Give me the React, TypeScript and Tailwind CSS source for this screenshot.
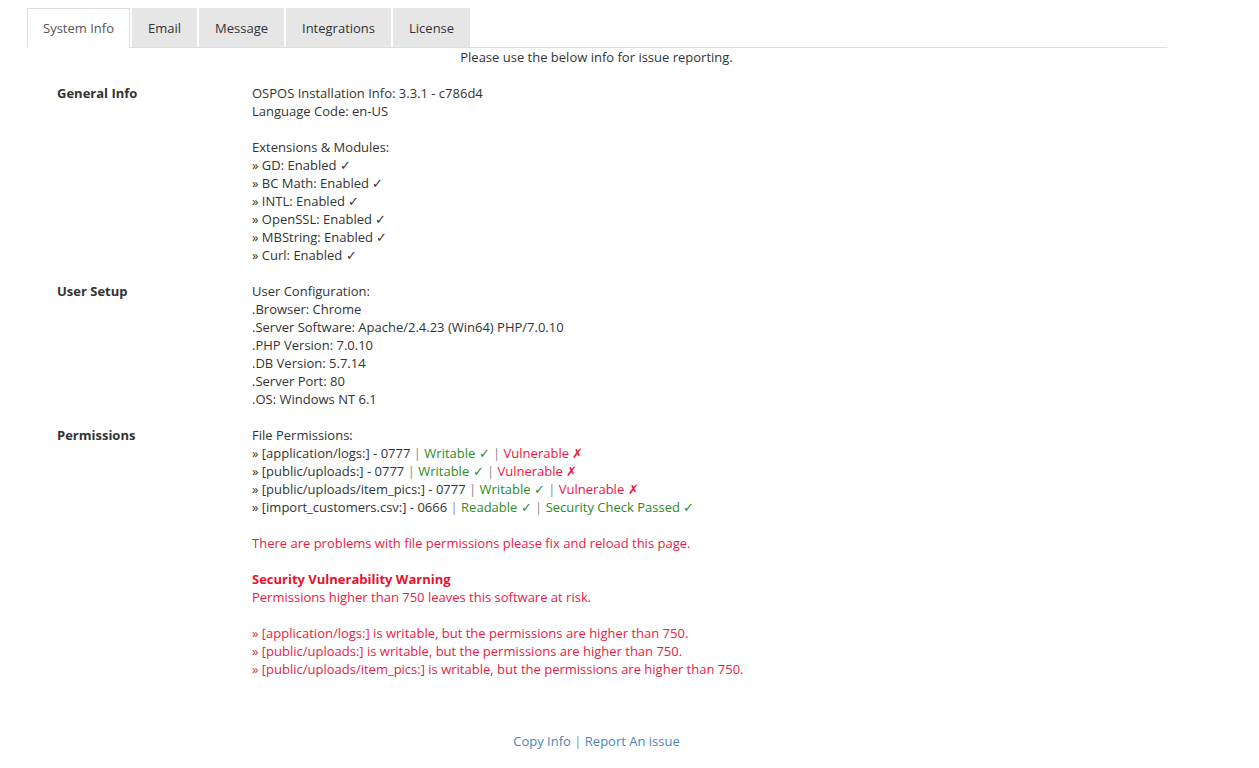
import React from 'react';

const G = ({ children }: { children: React.ReactNode }) => <span className="text-[#2f8a23]">{children}</span>;
const R = ({ children }: { children: React.ReactNode }) => <span className="text-[#ec1744]">{children}</span>;
const Pipe = () => <span className="text-[#8a8a8a]"> | </span>;

const tabs = ['System Info', 'Email', 'Message', 'Integrations', 'License'];

const modules = ['GD', 'BC Math', 'INTL', 'OpenSSL', 'MBString', 'Curl'];

const setup = [
  '.Browser: Chrome',
  '.Server Software: Apache/2.4.23 (Win64) PHP/7.0.10',
  '.PHP Version: 7.0.10',
  '.DB Version: 5.7.14',
  '.Server Port: 80',
  '.OS: Windows NT 6.1',
];

const perms = [
  { path: 'application/logs:', mode: '0777' },
  { path: 'public/uploads:', mode: '0777' },
  { path: 'public/uploads/item_pics:', mode: '0777' },
];

const Row = ({ label, children }: { label: string; children: React.ReactNode }) => (
  <div className="flex mb-[18px]">
    <div className="w-[226px] shrink-0 pl-[31px] font-bold text-[#333]">{label}</div>
    <div>{children}</div>
  </div>
);

const App = () => {
  return (
    <div className="min-h-[768px] bg-white text-[13px] leading-[18px] text-[#333]" style={{ fontFamily: '"Open Sans", "Noto Sans", sans-serif' }}>
      <div className="ml-[26px] w-[1141px] pt-[8px]">
        <div className="flex gap-[2px] pl-[1px] border-b border-[#ddd] h-[40px]">
          {tabs.map((t, i) => (
            <div
              key={t}
              className={
                i === 0
                  ? 'h-[40px] px-[15px] flex items-center bg-white border border-[#ddd] border-b-white text-[#555]'
                  : 'h-[39px] px-[16px] flex items-center bg-[#e6e6e6] text-[#333]'
              }
            >
              {t}
            </div>
          ))}
        </div>

        <div className="text-center mb-[18px]">Please use the below info for issue reporting.</div>

        <Row label="General Info">
          <div>OSPOS Installation Info: 3.3.1 - c786d4</div>
          <div>Language Code: en-US</div>
          <div className="h-[18px]" />
          <div>Extensions &amp; Modules:</div>
          {modules.map((m) => (
            <div key={m}>» {m}: Enabled ✓</div>
          ))}
        </Row>

        <Row label="User Setup">
          <div>User Configuration:</div>
          {setup.map((s) => (
            <div key={s}>{s}</div>
          ))}
        </Row>

        <Row label="Permissions">
          <div>File Permissions:</div>
          {perms.map((p) => (
            <div key={p.path}>
              » [{p.path}] - {p.mode}
              <Pipe />
              <G>Writable ✓</G>
              <Pipe />
              <R>Vulnerable ✗</R>
            </div>
          ))}
          <div>
            » [import_customers.csv:] - 0666
            <Pipe />
            <G>Readable ✓</G>
            <Pipe />
            <G>Security Check Passed ✓</G>
          </div>
          <div className="h-[18px]" />
          <div className="text-[#e81b45]">There are problems with file permissions please fix and reload this page.</div>
          <div className="h-[18px]" />
          <div className="font-bold text-[#e8112d]">Security Vulnerability Warning</div>
          <div className="text-[#e81b45]">Permissions higher than 750 leaves this software at risk.</div>
          <div className="h-[18px]" />
          {perms.map((p) => (
            <div key={p.path} className="text-[#e81b45]">
              » [{p.path}] is writable, but the permissions are higher than 750.
            </div>
          ))}
        </Row>

        <div className="text-center mt-[54px] text-[#4a86b8]">
          <span>Copy Info</span>
          <span className="text-[#8a8a8a]"> | </span>
          <span>Report An issue</span>
        </div>
      </div>
    </div>
  );
};

export default App;
